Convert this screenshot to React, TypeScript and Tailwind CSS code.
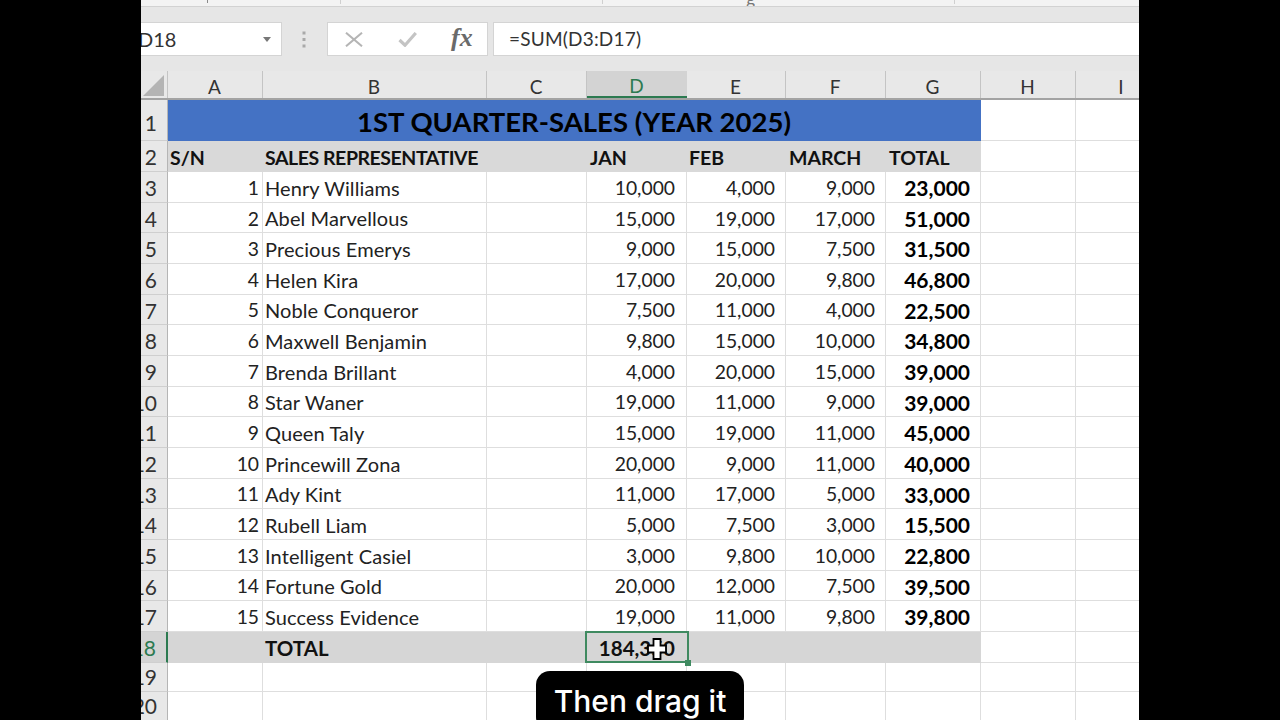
const font = "font-['Lato','Carlito','Liberation_Sans',sans-serif]";

const COLS = ["w-[95px]", "w-[224px]", "w-[100px]", "w-[100px]", "w-[99px]", "w-[100px]", "w-[95px]", "w-[95px]", "w-[92px]"];
const LETTERS = ["A", "B", "C", "D", "E", "F", "G", "H", "I"];

const DATA: [string, string, string, string, string][] = [
  ["Henry Williams", "10,000", "4,000", "9,000", "23,000"],
  ["Abel Marvellous", "15,000", "19,000", "17,000", "51,000"],
  ["Precious Emerys", "9,000", "15,000", "7,500", "31,500"],
  ["Helen Kira", "17,000", "20,000", "9,800", "46,800"],
  ["Noble Conqueror", "7,500", "11,000", "4,000", "22,500"],
  ["Maxwell Benjamin", "9,800", "15,000", "10,000", "34,800"],
  ["Brenda Brillant", "4,000", "20,000", "15,000", "39,000"],
  ["Star Waner", "19,000", "11,000", "9,000", "39,000"],
  ["Queen Taly", "15,000", "19,000", "11,000", "45,000"],
  ["Princewill Zona", "20,000", "9,000", "11,000", "40,000"],
  ["Ady Kint", "11,000", "17,000", "5,000", "33,000"],
  ["Rubell Liam", "5,000", "7,500", "3,000", "15,500"],
  ["Intelligent Casiel", "3,000", "9,800", "10,000", "22,800"],
  ["Fortune Gold", "20,000", "12,000", "7,500", "39,500"],
  ["Success Evidence", "19,000", "11,000", "9,800", "39,800"],
];

function RowHead({ n, active, className = "" }: { n: number; active?: boolean; className?: string }) {
  return (
    <div
      className={
        "w-[27px] shrink-0 h-full overflow-hidden flex items-center justify-end pr-[10px] text-[21px] border-b border-[#cfcfcf] " +
        (active
          ? "bg-[#d4d4d4] text-[#2c7a50] border-r-2 border-r-[#2c7a50] "
          : "bg-[#e8e8e8] text-[#333] border-r border-r-[#b5b5b5] ") +
        className
      }
    >
      <span className="whitespace-nowrap">{n}</span>
    </div>
  );
}

function Cell({
  i,
  children,
  className = "",
}: {
  i: number;
  children?: React.ReactNode;
  className?: string;
}) {
  return (
    <div className={"shrink-0 h-full flex items-center whitespace-nowrap border-r border-b border-[#dedede] " + COLS[i] + " " + className}>
      {children}
    </div>
  );
}

function EmptyTail() {
  return (
    <>
      <Cell i={7} />
      <Cell i={8} className="border-r-0" />
    </>
  );
}

export default function App() {
  return (
    <div className={"w-[1280px] h-[720px] overflow-hidden bg-black flex justify-center " + font}>
      <div className="relative w-[998px] h-full overflow-hidden bg-white flex flex-col text-[#111]">
        {/* ribbon remnant */}
        <div className="h-[7px] bg-[#f3f3f3] border-b border-[#d2d2d2] shrink-0 flex items-start overflow-hidden">
          <div className="w-[67px] border-r border-[#8a8a8a] h-[3px]" />
          <div className="w-[133px] border-r border-[#d0d0d0] h-[4px]" />
          <div className="w-[262px] border-r border-[#d0d0d0] h-[4px]" />
          <div className="w-[152px] h-[6px] overflow-hidden relative text-[#777]">
            <span className="absolute right-0 bottom-[-1px] text-[17px] leading-[17px]">g</span>
          </div>
          <div className="w-[200px] border-r border-[#d0d0d0] h-[4px]" />
        </div>

        {/* formula bar */}
        <div className="h-[64px] shrink-0 bg-[#e6e6e6] flex flex-col">
          <div className="h-[15px] shrink-0" />
          <div className="h-[34px] shrink-0 flex items-stretch">
            <div className="w-[141px] shrink-0 bg-white border-y border-r border-[#d4d4d4] flex items-center justify-between pr-[10px] text-[20px] text-[#333] overflow-hidden">
              <span className="ml-[-3px] whitespace-nowrap">D18</span>
              <svg width="8" height="5" viewBox="0 0 8 5">
                <path d="M0 0h8L4 5z" fill="#777" />
              </svg>
            </div>
            <div className="w-[45px] shrink-0 flex items-center justify-center pr-[2px]">
              <svg width="4" height="17" viewBox="0 0 4 17">
                <rect x="0.5" y="0.5" width="3" height="3" fill="#a9a9a9" />
                <rect x="0.5" y="7" width="3" height="3" fill="#a9a9a9" />
                <rect x="0.5" y="13.5" width="3" height="3" fill="#a9a9a9" />
              </svg>
            </div>
            <div className="w-[161px] shrink-0 bg-white border border-[#d4d4d4] flex items-center">
              <svg className="ml-[17px]" width="18" height="15" viewBox="0 0 18 15">
                <path d="M1 .7 17 14.3M17 .7 1 14.3" stroke="#b5b5b5" strokeWidth="2" fill="none" />
              </svg>
              <svg className="ml-[35px]" width="19" height="15" viewBox="0 0 19 15">
                <path d="M1.5 8 7 13.2 17.8 1" stroke="#c4c4c4" strokeWidth="3.2" fill="none" />
              </svg>
              <span className="ml-[34px] font-['Liberation_Serif',serif] italic font-bold text-[26px] text-[#6a6a6a] leading-none pb-[3px]">
                fx
              </span>
            </div>
            <div className="w-[5px] shrink-0" />
            <div className="flex-1 bg-white border-y border-l border-[#d4d4d4] flex items-center pl-[15px] text-[19px] text-[#333] tracking-[0.2px] whitespace-nowrap">
              =SUM(D3:D17)
            </div>
          </div>
        </div>

        {/* column headers */}
        <div className="h-[29px] shrink-0 flex bg-[#e8e8e8] border-b-2 border-[#a3a3a3] overflow-visible">
          <div className="w-[27px] shrink-0 h-full relative border-r border-[#c4c4c4]">
            <svg className="absolute right-[3px] bottom-[2px]" width="21" height="21" viewBox="0 0 21 21">
              <path d="M21 0V21H0z" fill="#b4b4b4" />
            </svg>
          </div>
          {LETTERS.map((l, i) => (
            <div
              key={l}
              className={
                "shrink-0 h-full flex items-center justify-center text-[19px] pt-[6px] pr-[1px] " +
                COLS[i] +
                (i === 3
                  ? " bg-[#d3d3d3] text-[#2c7a50] border-b-2 border-[#2c7a50]"
                  : " text-[#333] border-r border-[#c4c4c4]")
              }
            >
              {l}
            </div>
          ))}
        </div>

        {/* row 1 */}
        <div className="h-[41px] shrink-0 flex">
          <RowHead n={1} className="pt-[6px]" />
          <div className="w-[813px] shrink-0 bg-[#4472c4] flex items-center justify-center font-bold text-[27.5px] text-black pt-[3px] pr-[1px] whitespace-nowrap">
            1ST QUARTER-SALES (YEAR 2025)
          </div>
          <EmptyTail />
        </div>

        {/* row 2 */}
        <div className="h-[31px] shrink-0 flex">
          <RowHead n={2} className="pt-[2px]" />
          <div className="flex h-full bg-[#d9d9d9] font-bold text-[19.5px] text-[#111] pt-[2px] whitespace-nowrap">
            <div className={"shrink-0 flex items-center pl-[2px] " + COLS[0]}>S/N</div>
            <div className={"shrink-0 flex items-center pl-[2px] tracking-[-0.45px] " + COLS[1]}>SALES REPRESENTATIVE</div>
            <div className={"shrink-0 " + COLS[2]} />
            <div className={"shrink-0 flex items-center pl-[3px] " + COLS[3]}>JAN</div>
            <div className={"shrink-0 flex items-center pl-[2px] " + COLS[4]}>FEB</div>
            <div className={"shrink-0 flex items-center pl-[3px] " + COLS[5]}>MARCH</div>
            <div className={"shrink-0 flex items-center pl-[3px] " + COLS[6]}>TOTAL</div>
          </div>
          <EmptyTail />
        </div>

        {/* data rows */}
        {DATA.map((r, idx) => (
          <div key={r[0]} className="h-[30.66px] shrink-0 flex text-[19.3px] text-[#222]">
            <RowHead n={idx + 3} className="pt-[2px]" />
            <Cell i={0} className="justify-end pr-[3px] pt-[3px]">{idx + 1}</Cell>
            <Cell i={1} className="pl-[2px] pt-[2px] text-[20px] tracking-[0.1px]">{r[0]}</Cell>
            <Cell i={2} />
            <Cell i={3} className="justify-end pr-[11px] pt-[3px]">{r[1]}</Cell>
            <Cell i={4} className="justify-end pr-[10px] pt-[3px]">{r[2]}</Cell>
            <Cell i={5} className="justify-end pr-[10px] pt-[3px]">{r[3]}</Cell>
            <Cell i={6} className="justify-end pr-[10px] pt-[2px] font-bold text-[21px] text-black">{r[4]}</Cell>
            <EmptyTail />
          </div>
        ))}

        {/* row 18 */}
        <div className="h-[31px] shrink-0 flex">
          <RowHead n={18} active className="pt-[1px]" />
          <div className="flex h-full bg-[#d6d6d6] font-bold text-[20.5px] text-[#111] whitespace-nowrap">
            <div className={"shrink-0 " + COLS[0]} />
            <div className={"shrink-0 flex items-center pl-[2px] pt-[2px] " + COLS[1]}>TOTAL</div>
            <div className={"shrink-0 " + COLS[2]} />
            <div className={"shrink-0 relative flex items-center justify-end pr-[12px] pt-[2px] " + COLS[3]}>
              184,350
              <div className="absolute -left-[2px] -right-[2px] -top-[1px] bottom-0 border-2 border-[#3f8a60]" />
              <svg className="absolute left-[60px] top-[6px]" width="20" height="22" viewBox="0 0 20 22">
                <path d="M6.5 1h7v6.500H19v7h-5.500V21h-7v-6.500H1v-7h5.500z" fill="#fff" stroke="#000" strokeWidth="1.8" />
              </svg>
              <div className="absolute right-[-4px] bottom-[-3px] w-[6px] h-[6px] bg-[#3f8a60]" />
            </div>
            <div className={"shrink-0 " + COLS[4]} />
            <div className={"shrink-0 " + COLS[5]} />
            <div className={"shrink-0 " + COLS[6]} />
          </div>
          <EmptyTail />
        </div>

        {/* rows 19, 20 */}
        {[19, 20].map((n) => (
          <div key={n} className="h-[29px] shrink-0 flex">
            <RowHead n={n} />
            {COLS.map((_, i) => (
              <Cell key={i} i={i} className={i === 8 ? "border-r-0" : ""} />
            ))}
          </div>
        ))}

        {/* caption */}
        <div className="absolute left-[395px] top-[671px] w-[208px] h-[60px] bg-black rounded-[14px] text-white flex justify-center pt-[11px] font-['Inter',sans-serif] font-medium text-[30px] leading-[38px] whitespace-nowrap">
          Then drag it
        </div>
      </div>
    </div>
  );
}
